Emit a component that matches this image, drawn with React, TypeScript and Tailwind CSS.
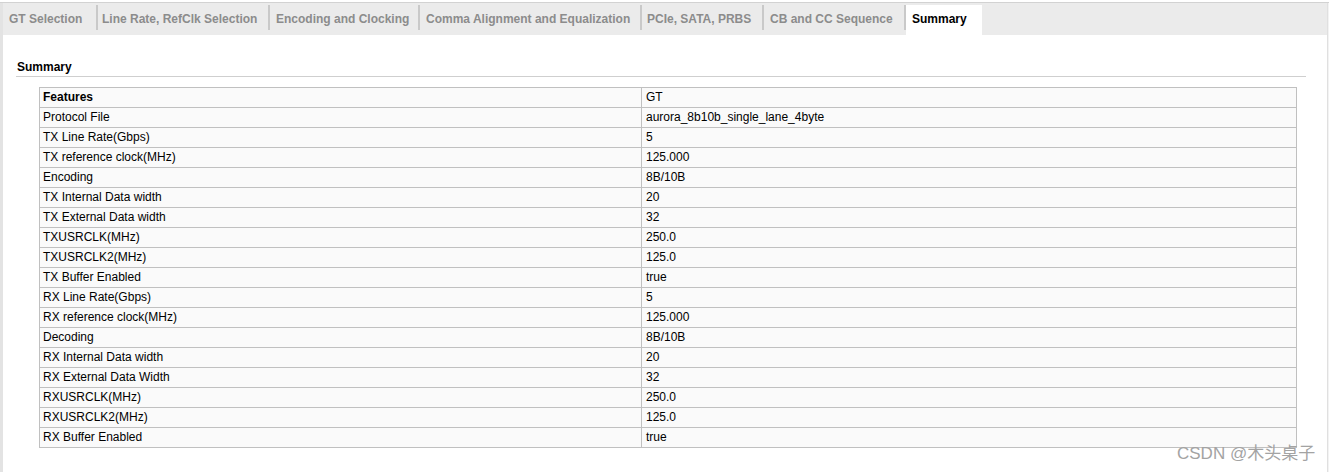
import React from 'react';

const TABS = [
  { label: 'GT Selection', w: 'w-[93px]', pl: 'pl-[6px]' },
  { label: 'Line Rate, RefClk Selection', w: 'w-[170px]', pl: 'pl-[4px]' },
  { label: 'Encoding and Clocking', w: 'w-[148px]', pl: 'pl-[6px]' },
  { label: 'Comma Alignment and Equalization', w: 'w-[220px]', pl: 'pl-[6px]' },
  { label: 'PCIe, SATA, PRBS', w: 'w-[120px]', pl: 'pl-[5px]' },
  { label: 'CB and CC Sequence', w: 'w-[140px]', pl: 'pl-[6px]' },
];

const ROWS: [string, string][] = [
  ['Protocol File', 'aurora_8b10b_single_lane_4byte'],
  ['TX Line Rate(Gbps)', '5'],
  ['TX reference clock(MHz)', '125.000'],
  ['Encoding', '8B/10B'],
  ['TX Internal Data width', '20'],
  ['TX External Data width', '32'],
  ['TXUSRCLK(MHz)', '250.0'],
  ['TXUSRCLK2(MHz)', '125.0'],
  ['TX Buffer Enabled', 'true'],
  ['RX Line Rate(Gbps)', '5'],
  ['RX reference clock(MHz)', '125.000'],
  ['Decoding', '8B/10B'],
  ['RX Internal Data width', '20'],
  ['RX External Data Width', '32'],
  ['RXUSRCLK(MHz)', '250.0'],
  ['RXUSRCLK2(MHz)', '125.0'],
  ['RX Buffer Enabled', 'true'],
];

function Sep() {
  return <div className="mt-[2px] h-[25px] w-[2px] shrink-0 bg-[#c9c9c9]" />;
}

export default function App() {
  return (
    <div className="relative h-[472px] w-[1329px] overflow-hidden bg-white font-['Liberation_Sans',Arial,sans-serif] text-[12px] text-black">
      <div className="h-[2px] bg-white" />
      <div className="h-px bg-[#d2d2d2]" />
      <div className="flex h-[469px]">
        <div className="w-[3px] shrink-0 bg-[#e3e3e3]" />
        <div className="flex min-w-0 flex-1 flex-col">
          {/* Tab strip */}
          <div className="flex h-[32px] items-start bg-[#ebebeb]">
            {TABS.map((t) => (
              <React.Fragment key={t.label}>
                <div className={`flex h-[32px] shrink-0 items-center font-bold text-[#8c8c8c] ${t.w} ${t.pl}`}>
                  <span className="whitespace-nowrap">{t.label}</span>
                </div>
                <Sep />
              </React.Fragment>
            ))}
            <div className="mt-[2px] flex h-[30px] w-[76px] shrink-0 items-center bg-white pb-[2px] pl-[6px] font-bold text-black">
              Summary
            </div>
          </div>

          {/* Content */}
          <div className="flex-1 pl-[13px] pt-[25px]">
            <div className="w-[1290px] border-b border-[#cfcfcf] pb-[2px] pl-[1px] font-bold leading-[14px]">Summary</div>
            <div className="ml-[23px] mt-[10px] w-[1258px] border-l border-t border-[#c0c0c0] bg-[#fafafa]">
              <div className="grid grid-cols-[602px_1fr]">
                <div className="h-[20px] border-b border-r border-[#c0c0c0] pl-[3px] font-bold leading-[19px]">Features</div>
                <div className="h-[20px] border-b border-r border-[#c0c0c0] pl-[4px] leading-[19px]">GT</div>
                {ROWS.map(([k, v]) => (
                  <React.Fragment key={k}>
                    <div className="h-[20px] border-b border-r border-[#c0c0c0] pl-[3px] leading-[19px]">{k}</div>
                    <div className="h-[20px] border-b border-r border-[#c0c0c0] pl-[4px] leading-[19px]">{v}</div>
                  </React.Fragment>
                ))}
              </div>
            </div>
          </div>
        </div>
        <div className="w-px shrink-0 bg-[#e0e0e0]" />
        <div className="w-px shrink-0 bg-[#f3f3f3]" />
      </div>

      {/* watermark */}
      <div className="absolute left-[1177px] top-[444px] whitespace-nowrap font-['Liberation_Sans','Noto_Sans_CJK_SC',sans-serif] text-[17px] leading-[20px] text-[#a3a3a3]">
        CSDN @木头桌子
      </div>
    </div>
  );
}
